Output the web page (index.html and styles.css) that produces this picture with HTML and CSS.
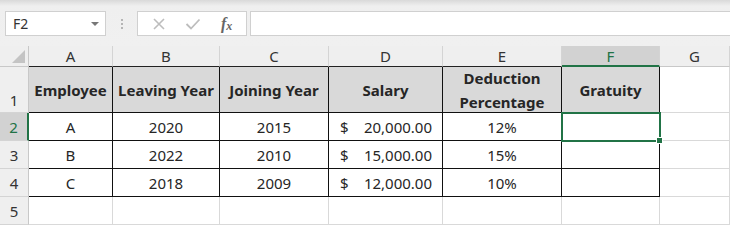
FILE: index.html
```html
<!DOCTYPE html>
<html lang="en">
<head>
  <meta charset="UTF-8">
  <link rel="stylesheet" href="styles.css">
  <title>Gratuity sheet</title>
</head>
<body>
  <div class="toolbar">
    <div class="namebox">F2<span class="caret"></span></div>
    <div class="grip"><span></span><span></span><span></span></div>
    <div class="fxbox">
      <svg class="ico" width="14" height="14" viewBox="0 0 14 14"><path d="M2 2 L12 12 M12 2 L2 12" stroke="#bdbdbd" stroke-width="1.6" fill="none"/></svg>
      <svg class="ico" width="16" height="14" viewBox="0 0 16 14"><path d="M1.5 7 L6 11.5 L14.5 2.5" stroke="#bdbdbd" stroke-width="1.8" fill="none"/></svg>
      <span class="fx">f<span class="x">x</span></span>
    </div>
    <div class="formula"></div>
  </div>

  <div class="sheet">
    <div class="corner"><span class="tri"></span></div>
    <div class="ch tb">A</div>
    <div class="ch tb">B</div>
    <div class="ch tb">C</div>
    <div class="ch tb">D</div>
    <div class="ch tb">E</div>
    <div class="ch sel">F</div>
    <div class="ch">G</div>

    <div class="rh rh-bottom">1</div>
    <div class="c t head first">Employee</div>
    <div class="c t head">Leaving Year</div>
    <div class="c t head">Joining Year</div>
    <div class="c t head">Salary</div>
    <div class="c t head">Deduction<br>Percentage</div>
    <div class="c t head">Gratuity</div>
    <div class="c"></div>

    <div class="rh sel">2</div>
    <div class="c t first">A</div>
    <div class="c t">2020</div>
    <div class="c t">2015</div>
    <div class="c t money"><span>$</span><span>20,000.00</span></div>
    <div class="c t">12%</div>
    <div class="c t active"></div>
    <div class="c"></div>

    <div class="rh">3</div>
    <div class="c t first">B</div>
    <div class="c t">2022</div>
    <div class="c t">2010</div>
    <div class="c t money"><span>$</span><span>15,000.00</span></div>
    <div class="c t">15%</div>
    <div class="c t"></div>
    <div class="c"></div>

    <div class="rh">4</div>
    <div class="c t first">C</div>
    <div class="c t">2018</div>
    <div class="c t">2009</div>
    <div class="c t money"><span>$</span><span>12,000.00</span></div>
    <div class="c t">10%</div>
    <div class="c t"></div>
    <div class="c"></div>

    <div class="rh">5</div>
    <div class="c"></div>
    <div class="c"></div>
    <div class="c"></div>
    <div class="c"></div>
    <div class="c"></div>
    <div class="c"></div>
    <div class="c"></div>
  </div>
</body>
</html>
```

FILE: styles.css
```css
html, body {
  margin: 0;
  width: 730px;
  height: 227px;
  overflow: hidden;
  background: #fff;
  font-family: "Noto Sans", "Liberation Sans", sans-serif;
}

.toolbar {
  height: 46px;
  box-sizing: border-box;
  padding: 11px 0 0 5px;
  display: flex;
  align-items: flex-start;
  background: linear-gradient(#d9d9d9, #efefef 6px, #f0f0f0);
}

.namebox {
  width: 101px;
  height: 25px;
  box-sizing: border-box;
  border: 1px solid #d0d0d0;
  background: #fff;
  display: flex;
  align-items: center;
  justify-content: space-between;
  padding: 0 6px 0 7px;
  font-size: 14px;
  color: #333;
}

.caret {
  width: 0;
  height: 0;
  border-left: 4px solid transparent;
  border-right: 4px solid transparent;
  border-top: 4px solid #777;
}

.grip {
  width: 31px;
  height: 25px;
  display: flex;
  flex-direction: column;
  align-items: center;
  justify-content: center;
  gap: 2px;
}

.grip span {
  width: 2px;
  height: 2px;
  background: #b5b5b5;
}

.fxbox {
  width: 110px;
  height: 25px;
  box-sizing: border-box;
  border: 1px solid #d0d0d0;
  background: #fff;
  display: flex;
  align-items: center;
  padding-left: 14px;
  gap: 19px;
}

.fx {
  font-family: "Liberation Serif", serif;
  font-style: italic;
  font-weight: bold;
  font-size: 16px;
  color: #666;
  margin-left: 1px;
}

.fx .x {
  font-size: 12px;
  position: relative;
  top: 1px;
}

.formula {
  flex: 1;
  height: 25px;
  margin-left: 3px;
  box-sizing: border-box;
  border: 1px solid #d0d0d0;
  border-right: none;
  background: #fff;
}

.sheet {
  display: grid;
  grid-template-columns: 29px 84px 107px 109px 114px 119px 98px 70px;
  grid-template-rows: 21px 46px 28px 28px 28px 28px;
}

.sheet > div {
  box-sizing: border-box;
}

.corner {
  background: #efefef;
  border-right: 1px solid #c8c8c8;
  border-bottom: 1px solid #c8c8c8;
  position: relative;
}

.tri {
  position: absolute;
  right: 3px;
  bottom: 3px;
  width: 0;
  height: 0;
  border-left: 13px solid transparent;
  border-bottom: 13px solid #c4c4c4;
}

.ch {
  background: #efefef;
  border-right: 1px solid #d4d4d4;
  border-bottom: 1px solid #c8c8c8;
  display: flex;
  align-items: center;
  justify-content: center;
  font-size: 15px;
  color: #333;
}

.ch.tb {
  border-bottom-color: #222;
}

.ch.sel {
  background: #d2d2d2;
  color: #217346;
  border-bottom: 2px solid #217346;
}

.rh {
  background: #efefef;
  border-right: 1px solid #c8c8c8;
  border-bottom: 1px solid #d4d4d4;
  display: flex;
  align-items: center;
  justify-content: center;
  font-size: 15px;
  color: #333;
}

.rh-bottom {
  align-items: flex-end;
  padding-bottom: 2px;
}

.rh.sel {
  background: #d2d2d2;
  color: #217346;
  border-right: 2px solid #217346;
}

.c {
  border-right: 1px solid #d9d9d9;
  border-bottom: 1px solid #d9d9d9;
  display: flex;
  align-items: center;
  justify-content: center;
  font-size: 15px;
  color: #262626;
  text-align: center;
  line-height: 24px;
}

.c.t {
  border-right-color: #111;
  border-bottom-color: #111;
}

.c.head {
  background: #d9d9d9;
  font-weight: bold;
  font-size: 15px;
}

.money {
  justify-content: space-between;
  padding: 0 10px 0 11px;
}

.active {
  position: relative;
}

.active::before {
  content: "";
  position: absolute;
  left: -1px;
  top: -1px;
  right: -2px;
  bottom: -2px;
  border: 2px solid #217346;
}

.active::after {
  content: "";
  position: absolute;
  right: -4px;
  bottom: -4px;
  width: 5px;
  height: 5px;
  background: #217346;
  border: 1px solid #fff;
}
```
